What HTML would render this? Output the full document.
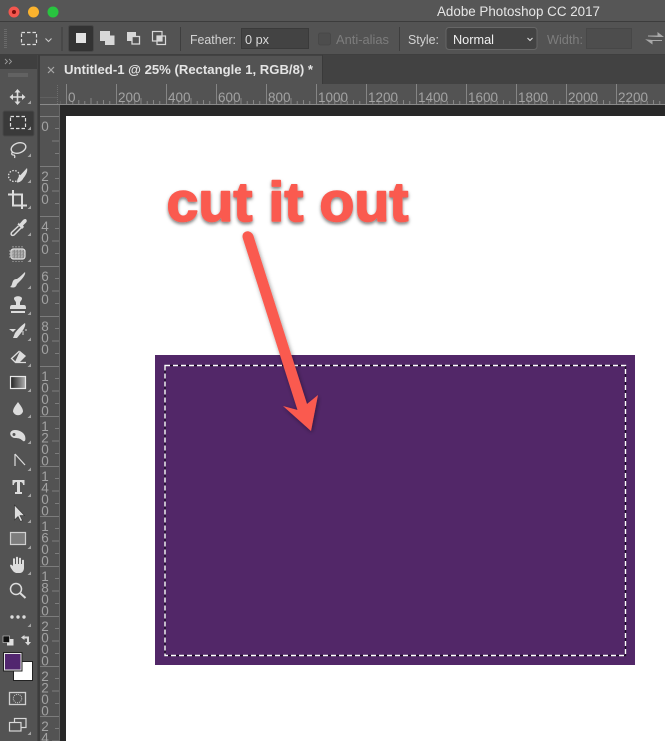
<!DOCTYPE html>
<html><head><meta charset="utf-8"><style>
html,body{margin:0;padding:0;background:#535353;width:665px;height:741px;overflow:hidden}
svg{display:block}
text{font-family:"Liberation Sans",sans-serif}
.ic{fill:#dcdcdc}
.st{fill:none;stroke:#dcdcdc;stroke-width:1.6}
.r{font-size:13.5px;fill:#a2a2a2}
.v{font-size:13.5px;fill:#a2a2a2;text-anchor:middle}
</style></head><body>
<svg width="665" height="741" viewBox="0 0 665 741" xmlns="http://www.w3.org/2000/svg">
<defs>
<pattern id="ht" x="66" y="84" width="50" height="21" patternUnits="userSpaceOnUse">
<path d="M.5 0V20M6.75 17V20M12.75 16V20M18.75 17V20M25 14V20M31.25 17V20M37.5 16V20M43.75 17V20" stroke="#858585" stroke-width="1" fill="none"/>
</pattern>
<pattern id="vt" x="40" y="116" width="20" height="50" patternUnits="userSpaceOnUse">
<path d="M0 .5H20M15 12.5H20M12 25H20M15 37.5H20" stroke="#7c7c7c" stroke-width="1" fill="none"/>
</pattern>
<filter id="sh" x="-10%" y="-20%" width="120%" height="140%"><feDropShadow dx="0" dy="2" stdDeviation="1.500" flood-color="#000" flood-opacity=".5"/></filter>
<filter id="sh2" x="-30%" y="-10%" width="160%" height="120%"><feDropShadow dx="1" dy="1.500" stdDeviation="2" flood-color="#000" flood-opacity=".4"/></filter>
<linearGradient id="g"><stop offset="0" stop-color="#222"/><stop offset="1" stop-color="#b0b0b0"/></linearGradient>
</defs>

<!-- base -->
<rect width="665" height="741" fill="#535353"/>
<!-- title bar -->
<rect width="665" height="21" fill="#565656"/>
<rect y="21" width="665" height="1" fill="#3c3c3c"/>
<circle cx="14" cy="12" r="5.500" fill="#f4564e"/><circle cx="14" cy="12" r="2" fill="#7a0f0c"/>
<circle cx="33.500" cy="12" r="5.500" fill="#fbb32e"/>
<circle cx="53" cy="12" r="5.500" fill="#28c43f"/>
<text x="437" y="16" font-size="13.500" fill="#e6e6e6" textLength="163" lengthAdjust="spacingAndGlyphs">Adobe Photoshop CC 2017</text>

<!-- options bar -->
<rect y="22" width="665" height="33" fill="#535353"/>
<rect y="54" width="665" height="1" fill="#3f3f3f"/>
<path d="M5.500 29V48" stroke="#6a6a6a" stroke-width="3" stroke-dasharray="1 1"/>
<rect x="21.500" y="32.500" width="15" height="12" fill="none" stroke="#dcdcdc" stroke-width="1.200" stroke-dasharray="3.500 2"/>
<path d="M45.500 38.500L48.500 41.500L51.500 38.500" fill="none" stroke="#c8c8c8" stroke-width="1.100"/>
<rect x="61.500" y="27" width="1" height="24" fill="#3e3e3e"/>
<rect x="68.500" y="25.500" width="25" height="26" rx="2" fill="#333" stroke="#484848"/>
<rect x="76" y="33" width="10" height="10" fill="#e2e2e2"/>
<rect x="100" y="31" width="10" height="10" fill="#d8d8d8"/><rect x="105" y="35.500" width="9.500" height="9.500" fill="#d8d8d8"/>
<rect x="127" y="32" width="9" height="9" fill="#d8d8d8"/><rect x="132" y="36.500" width="7.500" height="7.500" fill="#535353" stroke="#d8d8d8" stroke-width="1.300"/>
<rect x="152.500" y="31.500" width="9.500" height="9.500" fill="none" stroke="#d8d8d8" stroke-width="1.200"/><rect x="157" y="36" width="8.500" height="8.500" fill="none" stroke="#d8d8d8" stroke-width="1.200"/><rect x="157" y="36" width="5" height="5" fill="#d8d8d8"/>
<rect x="180" y="27" width="1" height="24" fill="#3e3e3e"/>
<text x="190" y="44" font-size="12.500" fill="#d2d2d2" textLength="46" lengthAdjust="spacingAndGlyphs">Feather:</text>
<rect x="241.500" y="28.500" width="67" height="20" fill="#434343" stroke="#3a3a3a"/>
<text x="245" y="44" font-size="12.500" fill="#dadada" textLength="24" lengthAdjust="spacingAndGlyphs">0 px</text>
<rect x="318.500" y="33" width="12" height="12" rx="2" fill="#4d4d4d" stroke="#484848"/>
<text x="336" y="44" font-size="12.500" fill="#7d7d7d" textLength="53" lengthAdjust="spacingAndGlyphs">Anti-alias</text>
<rect x="399" y="27" width="1" height="24" fill="#3e3e3e"/>
<text x="408" y="44" font-size="12.500" fill="#d2d2d2" textLength="31" lengthAdjust="spacingAndGlyphs">Style:</text>
<rect x="446" y="27.500" width="91" height="22" rx="3" fill="#434343" stroke="#666"/>
<text x="453" y="44" font-size="12.500" fill="#efefef" textLength="41" lengthAdjust="spacingAndGlyphs">Normal</text>
<path d="M527.500 38L530 40.500L532.500 38" fill="none" stroke="#dcdcdc" stroke-width="1.100"/>
<text x="547" y="44" font-size="12.500" fill="#7d7d7d" textLength="36" lengthAdjust="spacingAndGlyphs">Width:</text>
<rect x="586.500" y="28.500" width="45" height="20" fill="#4d4d4d" stroke="#474747"/>
<path d="M648 36H658V33L662.500 36.500L658 36.500ZM662 40.500H652V43.500L647 40L652 40.500Z" fill="#a8a8a8" stroke="#a8a8a8" stroke-width="1"/>

<!-- tab row -->
<rect x="40" y="55" width="625" height="29" fill="#424242"/>
<rect x="40" y="56" width="282" height="28" fill="#535353"/>
<rect x="322" y="55" width="1" height="29" fill="#3a3a3a"/>
<path d="M48 67L54 73M54 67L48 73" stroke="#a8a8a8" stroke-width="1.200"/>
<text x="64" y="74" font-size="12.500" font-weight="bold" fill="#e4e4e4" textLength="249" lengthAdjust="spacingAndGlyphs">Untitled-1 @ 25% (Rectangle 1, RGB/8) *</text>

<!-- left panel -->
<rect y="55" width="37" height="686" fill="#535353"/>
<rect y="55" width="37" height="14" fill="#3f3f3f"/>
<path d="M5 59L7.500 61.500L5 64M9 59L11.500 61.500L9 64" fill="none" stroke="#9a9a9a" stroke-width=".9"/>
<path d="M9 73V77M11 73V77M13 73V77M15 73V77M17 73V77M19 73V77M21 73V77M23 73V77M25 73V77M27 73V77" stroke="#727272" stroke-width="1"/>
<rect x="37" y="55" width="3" height="686" fill="#3c3c3c"/>
<rect x="37" y="55" width="1" height="686" fill="#454545"/>

<!-- rulers -->
<rect x="40" y="84" width="625" height="21" fill="#535353"/>
<rect x="60" y="84" width="605" height="21" fill="url(#ht)"/>
<rect x="40" y="104" width="625" height="1" fill="#8a8a8a"/>
<path d="M40.500 97.500H58M57.500 85V104" stroke="#6e6e6e" stroke-dasharray="1 1" fill="none"/>
<rect x="40" y="105" width="20" height="636" fill="#535353"/>
<rect x="40" y="116" width="20" height="625" fill="url(#vt)"/>
<rect x="59" y="105" width="1" height="636" fill="#666"/>
<text class="r" x="68" y="102">0</text>
<text class="r" x="118" y="102">200</text><text class="r" x="168" y="102">400</text><text class="r" x="218" y="102">600</text>
<text class="r" x="268" y="102">800</text><text class="r" x="318" y="102">1000</text><text class="r" x="368" y="102">1200</text>
<text class="r" x="418" y="102">1400</text><text class="r" x="468" y="102">1600</text><text class="r" x="518" y="102">1800</text>
<text class="r" x="568" y="102">2000</text><text class="r" x="618" y="102">2200</text>
<g>
<text class="v" x="45" y="131">0</text>
<text class="v" x="45" y="181">2</text><text class="v" x="45" y="192.500">0</text><text class="v" x="45" y="204">0</text>
<text class="v" x="45" y="231">4</text><text class="v" x="45" y="242.500">0</text><text class="v" x="45" y="254">0</text>
<text class="v" x="45" y="281">6</text><text class="v" x="45" y="292.500">0</text><text class="v" x="45" y="304">0</text>
<text class="v" x="45" y="331">8</text><text class="v" x="45" y="342.500">0</text><text class="v" x="45" y="354">0</text>
<text class="v" x="45" y="381">1</text><text class="v" x="45" y="392.500">0</text><text class="v" x="45" y="404">0</text><text class="v" x="45" y="415.500">0</text>
<text class="v" x="45" y="431">1</text><text class="v" x="45" y="442.500">2</text><text class="v" x="45" y="454">0</text><text class="v" x="45" y="465.500">0</text>
<text class="v" x="45" y="481">1</text><text class="v" x="45" y="492.500">4</text><text class="v" x="45" y="504">0</text><text class="v" x="45" y="515.500">0</text>
<text class="v" x="45" y="531">1</text><text class="v" x="45" y="542.500">6</text><text class="v" x="45" y="554">0</text><text class="v" x="45" y="565.500">0</text>
<text class="v" x="45" y="581">1</text><text class="v" x="45" y="592.500">8</text><text class="v" x="45" y="604">0</text><text class="v" x="45" y="615.500">0</text>
<text class="v" x="45" y="631">2</text><text class="v" x="45" y="642.500">0</text><text class="v" x="45" y="654">0</text><text class="v" x="45" y="665.500">0</text>
<text class="v" x="45" y="681">2</text><text class="v" x="45" y="692.500">2</text><text class="v" x="45" y="704">0</text><text class="v" x="45" y="715.500">0</text>
<text class="v" x="45" y="731">2</text><text class="v" x="45" y="742.500">4</text>
</g>

<!-- canvas -->
<rect x="60" y="105" width="605" height="636" fill="#282828"/>
<rect x="66" y="116" width="599" height="625" fill="#fff"/>
<rect x="155" y="355" width="480" height="310" fill="#522768"/>
<rect x="165" y="365.500" width="460.500" height="290" fill="none" stroke="#1d0c28" stroke-width="1.400"/>
<rect x="165" y="365.500" width="460.500" height="290" fill="none" stroke="#fff" stroke-width="1.400" stroke-dasharray="5 3"/>

<text x="166.500" y="221" font-size="56" font-weight="bold" fill="#fa5a50" stroke="#fa5a50" stroke-width="1.600" stroke-linejoin="round" filter="url(#sh)" textLength="242" lengthAdjust="spacingAndGlyphs">cut it out</text>
<path d="M242.700 238C241.500 233 246 230.500 249 231.500C251.500 232.300 253.200 234 254 237.500L307 404L318 395L311 431L283 406L297.500 410Z" fill="#fa5a50" filter="url(#sh2)"/>

<!-- tool selected -->
<rect x="3" y="111" width="31" height="25" rx="2" fill="#3a3a3a" stroke="#484848"/>

<!-- move -->
<path d="M17.500 91V103M11.500 97H23.500" stroke="#dcdcdc" stroke-width="1.600"/>
<path class="ic" d="M17.500 89L20.500 92.500H14.500ZM17.500 105L14.500 101.500H20.500ZM9.500 97L13 94V100ZM25.500 97L22 94V100Z"/>
<!-- marquee -->
<rect x="10.500" y="116.500" width="15" height="12" fill="none" stroke="#e0e0e0" stroke-width="1.200" stroke-dasharray="3.500 2"/>
<!-- lasso -->
<ellipse cx="18.500" cy="148" rx="7.500" ry="5" transform="rotate(-18 18.500 148)" fill="none" stroke="#dcdcdc" stroke-width="1.400"/>
<path class="st" style="stroke-width:1.300" d="M13 152C11 153 11.500 155 13.500 155C15 155 15 157 14.500 158"/>
<!-- quick select -->
<circle cx="14" cy="176" r="5.500" fill="none" stroke="#dcdcdc" stroke-width="1.300" stroke-dasharray="1.500 1.500"/>
<path class="ic" d="M27 168C28 171 26 175 23.500 178C22 181 19.500 182.500 17 182.500C17 179.500 18.500 176.500 21 174.500C23 172.500 25 170 27 168Z"/>
<!-- crop -->
<path class="ic" d="M8 193.500H12V190H14V193.500H23V204.500H27V206.500H23V209H21V206.500H12V195.500H8ZM14 195.500V204.500H21V195.500Z"/>
<!-- eyedropper -->
<path class="ic" d="M19.500 224L23 220C25 218 27.500 219 26.500 222L23 225.500L24 227L22 229L17.500 224.500L19 222.500Z"/>
<path class="st" style="stroke-width:1.500" d="M18.500 226L11.500 232.500C10.500 235 12 236 14 235L21 228"/>
<!-- patch -->
<rect x="11" y="249" width="14" height="10" rx="2.500" fill="#8a8a8a" stroke="#e0e0e0" stroke-width="1.200"/>
<path d="M13 246V262M16 246V262M19 246V262M22 246V262M9 251H27M9 254H27M9 257H27" stroke="#dcdcdc" stroke-width=".8" stroke-dasharray="1.500 1.500" opacity=".85"/>
<!-- brush -->
<path class="ic" d="M25 272C26 274 23 278 20 281L17 284C16 288 13 288 10 287C12 286 12 283 13 281C14 279 16 279 17 279C20 277 23 274 25 272Z"/>
<!-- stamp -->
<path class="ic" d="M14 298.500C14 295.500 22 295.500 22 298.500C22 300.500 20 301 20 303V305H24C26 305 26 307 26 309H10C10 307 10 305 12 305H16V303C16 301 14 300.500 14 298.500ZM11 311H25V313H11Z"/>
<!-- heal -->
<path class="ic" d="M25 323C26 325 24 329 21 333L17 338H13L15 333C18 329 22 325 25 323ZM9 329H16L13 332Z"/>
<path d="M23 331V335M26 329V331" stroke="#dcdcdc" stroke-width="1"/>
<!-- eraser -->
<path class="ic" d="M20 351L26 356L20 362H15Z"/>
<path class="st" style="stroke-width:1.300" d="M19.500 351L11.500 358.500L15.500 362.500H26"/>
<!-- gradient -->
<rect x="10.500" y="376.500" width="15" height="12" fill="url(#g)" stroke="#e8e8e8" stroke-width="1.200"/>
<!-- drop -->
<path class="ic" d="M18 402C20 405 23 408 23 411.500A5.200 5.200 0 0 1 13 411.500C13 408 16 405 18 402Z"/>
<!-- smudge -->
<path class="ic" d="M11 436C9 433 11 430 15 430C20 430 24 433 25 436C26 440 25 442 23 441C21 439 19 438 15 438C13 438 12 437 11 436ZM14 433A1.500 1.500 0 1 0 14 436A1.500 1.500 0 1 0 14 433Z" fill-rule="evenodd"/>
<!-- pen -->
<path class="st" style="stroke-width:1.200" d="M15 454V466M15 454L25 465"/>
<!-- T -->
<path class="ic" d="M12.500 480H24.500V485H23C23 483 22 482 20 482V492H22V494H15V492H17V482C15 482 14 483 14 485H12.500Z"/>
<!-- arrow -->
<path d="M14.500 505V520L18 516.500L20.500 521.500L22.500 520.500L20 515.500H24.500Z" fill="#dcdcdc" stroke="#333" stroke-width=".6"/>
<!-- rectangle -->
<rect x="10.500" y="532.500" width="15" height="12" fill="#7d7d7d" stroke="#d0d0d0" stroke-width="1.200"/>
<!-- hand -->
<path class="ic" d="M14 572C12 570 10 567 10 565C11 564 12 565 13 566V559C13 558 15 558 15 559V564H16V557.500C16 556.500 18 556.500 18 557.500V564H19V558.500C19 557.500 21 557.500 21 558.500V564H22V560.500C22 559.500 24 559.500 24 560.500V568C24 571 22 573 20 573H16Z"/>
<!-- zoom -->
<circle cx="16" cy="589" r="5.500" fill="none" stroke="#dcdcdc" stroke-width="1.500"/>
<path d="M20 593L25.500 598" stroke="#dcdcdc" stroke-width="2"/>
<!-- dots -->
<circle cx="12" cy="617" r="1.700" class="ic"/><circle cx="18" cy="617" r="1.700" class="ic"/><circle cx="24" cy="617" r="1.700" class="ic"/>

<!-- tool corner marks -->
<path d="M31 104V100.500L27.500 104ZM31 130V126.500L27.500 130ZM31 157V153.500L27.500 157ZM31 183V179.500L27.500 183ZM31 209V205.500L27.500 209ZM31 236V232.500L27.500 236ZM31 262V258.500L27.500 262ZM31 289V285.500L27.500 289ZM31 315V311.500L27.500 315ZM31 341V337.500L27.500 341ZM31 367V363.500L27.500 367ZM31 392V388.500L27.500 392ZM31 418V414.500L27.500 418ZM31 444V440.500L27.500 444ZM31 471V467.500L27.500 471ZM31 497V493.500L27.500 497ZM31 523V519.500L27.500 523ZM31 549V545.500L27.500 549ZM31 575V571.500L27.500 575ZM31 627V623.500L27.500 627ZM31 735V731.500L27.500 735Z" fill="#a4a4a4"/>

<!-- small fg/bg -->
<rect x="7" y="639" width="6.500" height="6.500" fill="#e0e0e0"/>
<rect x="3" y="636" width="6.500" height="6.500" fill="#111" stroke="#d0d0d0" stroke-width=".6"/>
<!-- swap -->
<path d="M21 637.500L24.500 635V636.500H29V642H31L28 645.500L25 642H27V638.500H24.500V640Z" fill="#d8d8d8"/>
<!-- bg/fg swatches -->
<rect x="13.500" y="661.500" width="19" height="19" fill="#fff" stroke="#222" stroke-width="1"/>
<rect x="3.500" y="652.500" width="18.500" height="18.500" fill="#52266f" stroke="#222" stroke-width="1"/>
<rect x="4.500" y="653.500" width="16.500" height="16.500" fill="none" stroke="#e6e6e6" stroke-width="1"/>
<!-- quick mask -->
<rect x="9.500" y="692.500" width="16" height="12" fill="none" stroke="#d0d0d0" stroke-width="1.300"/>
<circle cx="17.500" cy="698.500" r="4.200" fill="none" stroke="#d0d0d0" stroke-width="1" stroke-dasharray="1 1"/>
<!-- screen mode -->
<rect x="14.500" y="718.500" width="11.500" height="9" fill="none" stroke="#d8d8d8" stroke-width="1.200"/>
<rect x="9.500" y="722.500" width="11.500" height="8.500" fill="#535353" stroke="#d8d8d8" stroke-width="1.200"/>
</svg>
</body></html>
